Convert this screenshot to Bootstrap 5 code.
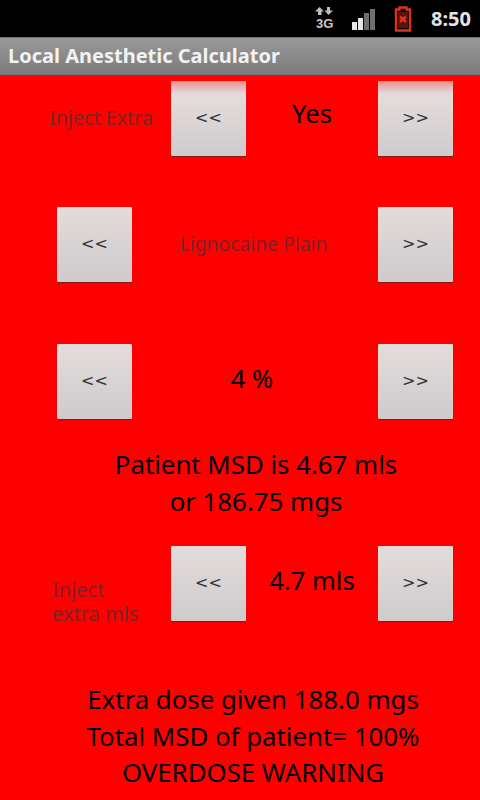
<!DOCTYPE html>
<html lang="en">
<head>
<meta charset="utf-8">
<title>Local Anesthetic Calculator</title>
<link href="https://cdn.jsdelivr.net/npm/bootstrap@5.3.0/dist/css/bootstrap.min.css" rel="stylesheet">
<style>
html,body{width:480px;height:800px;overflow:hidden;background:#f00;font-family:"Noto Sans","Open Sans",sans-serif;color:#000}
.sbar{height:37px;background:#000;color:#e4e4e4;padding-right:9px}
.sbar svg{display:block}
.gap-s{margin-right:19px}
.gap-t{margin-right:18px}
.clock{font-size:20px;font-weight:700;line-height:1}
.tbar{height:38px;background:linear-gradient(#999,#7b7b7b);color:#f2f2f2;font-size:20px;font-weight:700;padding-left:8px;border-top:1px solid #6e6e6e;border-bottom:1px solid #777;white-space:nowrap}
.pane{height:725px}
.line-a{height:75px;margin-top:6px}
.line-b{height:75px;margin-top:51px}
.line-c{height:75px;margin-top:62px}
.line-d{height:75px;margin-top:27px}
.keyb{width:75px;height:75px;padding:0 0 2px;flex:none;border:0;border-radius:1px;background:linear-gradient(#e3dcdd,#cfcacb);color:#333;font-size:16px;box-shadow:0 1px 1px #7d1c1c;font-family:"DejaVu Sans",sans-serif;line-height:1}
.keyb.lit{background:linear-gradient(#ec8f8f,#e3d6d7 12px,#e3dcdd 16px,#cfcacb)}
.keyb:hover,.keyb:active{background:linear-gradient(#e3dcdd,#cfcacb);color:#333}
.keyb.lit:hover{background:linear-gradient(#ec8f8f,#e3d6d7 12px,#e3dcdd 16px,#cfcacb)}
.dim{color:#7d2226}
.dim-a{font-size:19.700px;line-height:24px;width:171px;padding-left:49px;padding-top:25px}
.dim-b{font-size:19.300px;line-height:24px;width:246px;padding-right:3px;padding-bottom:2px}
.dim-d{font-size:20px;line-height:24px;width:171px;padding-left:52px;padding-right:25px;padding-top:32px}
.spacer{width:57px}
.val{font-size:25.500px;line-height:30px;padding-bottom:8px}
.val-yes{padding-bottom:12px}
.val-n{width:132px}
.val-w{width:246px;padding-right:6px}
.msg{font-size:25.800px;line-height:36.500px;white-space:nowrap}
.msg-a{padding-left:32px;margin-top:27px}
.msg-b{padding-left:26px;margin-top:60px}
</style>
</head>
<body>
<div class="sbar d-flex align-items-center justify-content-end">
  <svg width="18" height="24" viewBox="0 0 18 24" class="gap-s" aria-hidden="true"><g fill="#bdbdbd"><path d="M4.500 0 9 4.500H6.500V8H3V4.500H0Z"/><path d="M12 0h3v3.500h3L13.500 8 9.500 3.500H12Z"/></g><text x="1" y="21" font-size="13" font-weight="700" font-family="Liberation Sans" fill="#c8c8c8">3G</text></svg>
  <svg width="24" height="22" viewBox="0 0 24 22" class="gap-t" aria-hidden="true"><rect x="0" y="14" width="5" height="8" fill="#e6e6e6"/><rect x="6" y="10" width="5" height="12" fill="#e6e6e6"/><rect x="12" y="5" width="5" height="17" fill="#6f6f6f"/><rect x="18" y="1" width="5" height="21" fill="#6f6f6f"/></svg>
  <svg width="18" height="26" viewBox="0 0 18 26" class="gap-s" aria-hidden="true"><path d="M5.500 1.500h7v2h3.500v21H2v-21h3.500Z" fill="none" stroke="#d9341c" stroke-width="2.400"/><rect x="4" y="6" width="10" height="16" fill="#5a120a"/><path d="M6 10.500 12 16M12 10.500 6 16" stroke="#d9341c" stroke-width="2.400"/></svg>
  <span class="clock">8:50</span>
</div>
<div class="tbar d-flex align-items-center">Local Anesthetic Calculator</div>
<main class="pane">
  <div class="line-a d-flex">
    <div class="dim dim-a">Inject Extra</div>
    <button type="button" class="btn keyb lit">&lt;&lt;</button>
    <div class="val val-yes val-n d-flex align-items-center justify-content-center">Yes</div>
    <button type="button" class="btn keyb lit">&gt;&gt;</button>
  </div>
  <div class="line-b d-flex">
    <div class="spacer"></div>
    <button type="button" class="btn keyb">&lt;&lt;</button>
    <div class="dim dim-b d-flex align-items-center justify-content-center">Lignocaine Plain</div>
    <button type="button" class="btn keyb">&gt;&gt;</button>
  </div>
  <div class="line-c d-flex">
    <div class="spacer"></div>
    <button type="button" class="btn keyb">&lt;&lt;</button>
    <div class="val val-w d-flex align-items-center justify-content-center">4 %</div>
    <button type="button" class="btn keyb">&gt;&gt;</button>
  </div>
  <div class="msg msg-a text-center">Patient MSD is 4.67 mls<br>or 186.75 mgs</div>
  <div class="line-d d-flex">
    <div class="dim dim-d">Inject extra mls</div>
    <button type="button" class="btn keyb">&lt;&lt;</button>
    <div class="val val-n d-flex align-items-center justify-content-center">4.7 mls</div>
    <button type="button" class="btn keyb">&gt;&gt;</button>
  </div>
  <div class="msg msg-b text-center">Extra dose given 188.0 mgs<br>Total MSD of patient= 100%<br>OVERDOSE WARNING</div>
</main>
<script src="https://cdn.jsdelivr.net/npm/bootstrap@5.3.0/dist/js/bootstrap.bundle.min.js"></script>
</body>
</html>
